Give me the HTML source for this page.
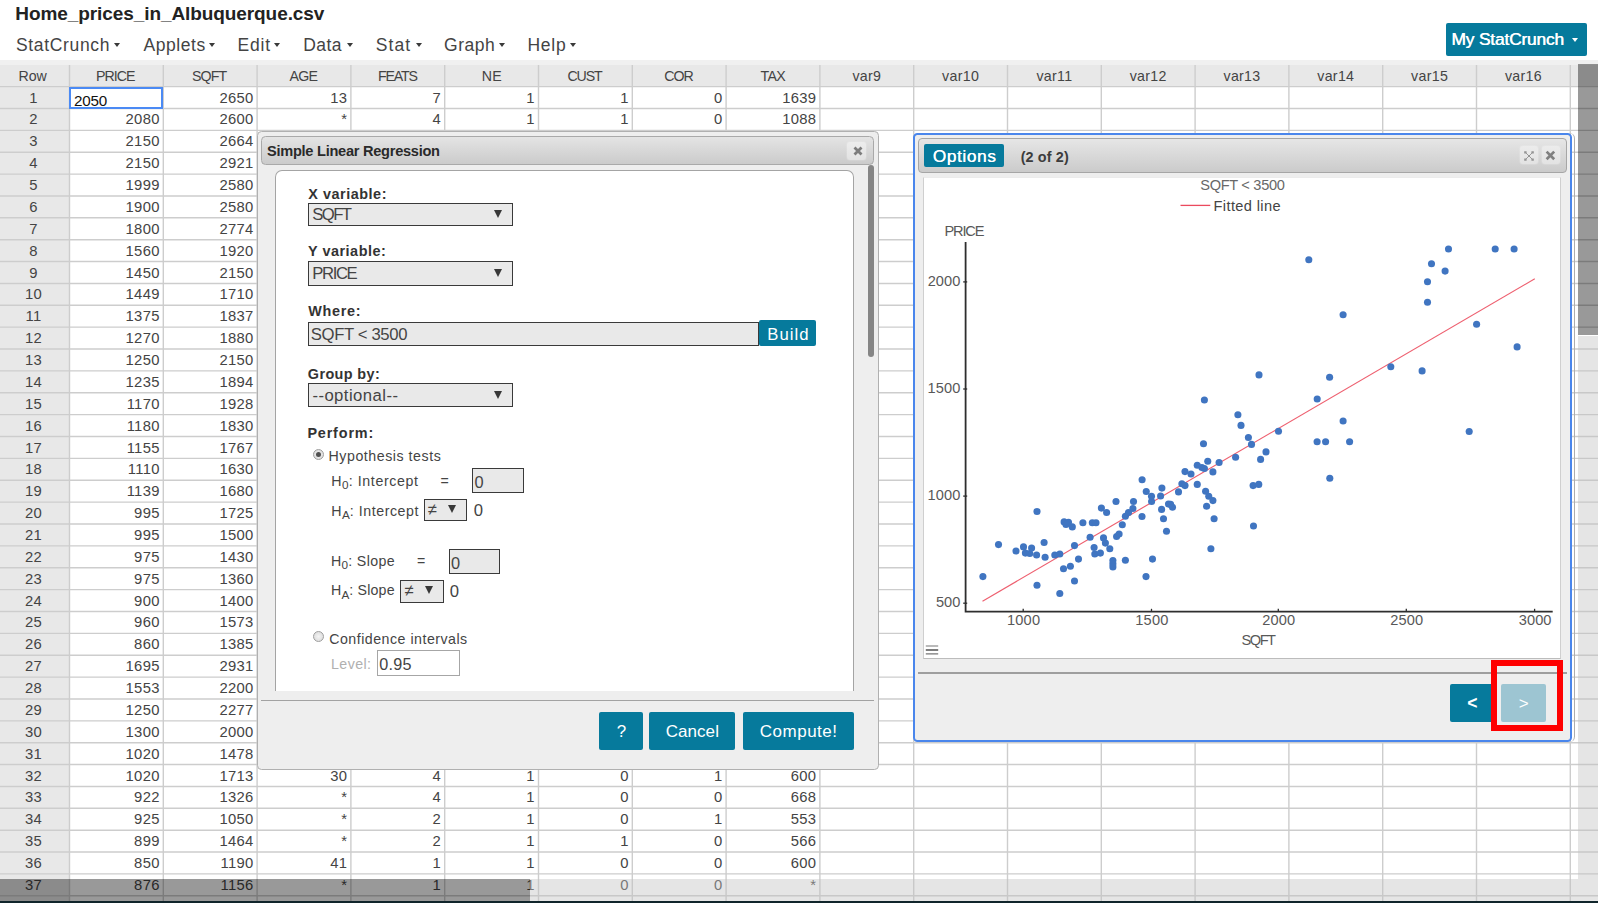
<!DOCTYPE html><html><head><meta charset="utf-8"><title>StatCrunch</title><style>
*{box-sizing:border-box;margin:0;padding:0}
html,body{width:1598px;height:903px;overflow:hidden;background:#fff}
body{font-family:"Liberation Sans",sans-serif;color:#444;position:relative}
.abs{position:absolute}
.t{position:absolute;white-space:nowrap;line-height:1;color:#444}
.caret{position:absolute;width:0;height:0;border-left:3.7px solid transparent;border-right:3.7px solid transparent;border-top:4px solid #3a3a3a;top:43px}
#mysc{left:1446.4px;top:23.4px;width:140.6px;height:32.4px;background:#067a9c;border-radius:2px}
#mysc i{position:absolute;left:125.2px;top:14.6px;width:0;height:0;border-left:3.5px solid transparent;border-right:3.5px solid transparent;border-top:4.2px solid #fff}
#gridtop{left:0;top:59.7px;width:1598px;height:6px;background:#f0f0f0}
#grid{left:0;top:65.0px;width:1598px;height:838px;overflow:hidden;background:#fff}
.hl{position:absolute;left:0;width:1598px;height:1.3px;background:#d3d3d3}
.vl{position:absolute;top:0;width:1.3px;height:840px;background:#d3d3d3}
.hb{position:absolute;top:0;left:0;width:1598px;height:21.6px;background:#e8e8e8}
.rb{position:absolute;top:0;left:0;width:69.5px;height:840px;background:#e8e8e8}
.hc{position:absolute;top:0;height:21.6px;text-align:center;font-size:14.2px;line-height:22.4px;color:#444;letter-spacing:0.3px}
.rh{position:absolute;left:0;width:69.5px;height:21.87px;text-align:center;font-size:14.8px;line-height:23.470000000000002px;color:#444;padding-right:2.4px;letter-spacing:0.3px}
.c{position:absolute;width:93.8px;height:21.87px;text-align:right;padding-right:3.6px;font-size:14.8px;line-height:23.470000000000002px;color:#444;letter-spacing:0.3px}
#selcell{left:68.9px;top:87.1px;width:94px;height:22.2px;border:2px solid #4b8af4;background:#fff}

#d1{left:256.6px;top:131px;width:622px;height:638.6px;background:#eee;border:1.6px solid #b0b0b0;border-radius:4.5px}
#d1bar{left:261.3px;top:135.9px;width:612.8px;height:29.3px;border:1.5px solid #a9a9a9;border-radius:4.5px;background:linear-gradient(#e4e4e4,#cbcbcb)}
.xbtn{position:absolute;width:19.2px;height:17.4px;background:linear-gradient(#ededed,#e2e2e2);border-radius:3px;box-shadow:0 0 1.5px rgba(255,255,255,0.6)}
.xbtn svg{position:absolute;left:5.6px;top:3.9px}
#d1panel{left:275.4px;top:170.2px;width:578.4px;height:521.3px;background:#fff;border:1.6px solid #a4a4a4;border-bottom:none;border-radius:7px 7px 0 0}
#d1sb{left:868.1px;top:165.4px;width:5.7px;height:192px;background:#858585;border-radius:3px}
#d1sep{left:261.3px;top:699.9px;width:612.8px;height:1.5px;background:#a2a2a2}
.sel{position:absolute;background:#e9e9e9;border:1.5px solid #3a3a3a}
.arr{position:absolute;width:0;height:0;border-left:4.9px solid transparent;border-right:4.9px solid transparent;border-top:8.8px solid #383838}
.btn{position:absolute;background:#067a9c;border-radius:2px}
.radio{position:absolute;width:11px;height:11px;border-radius:50%;border:1px solid #9e9e9e;background:radial-gradient(#f4f4f4,#d6d6d6)}
.radio b{position:absolute;left:2px;top:2px;width:5px;height:5px;border-radius:50%;background:#505050}
.t sub{font-size:0.83em;vertical-align:baseline;position:relative;top:3.6px;letter-spacing:0}

#d2{left:912.7px;top:132.5px;width:659.2px;height:609.1px;background:#eee;border:2.2px solid #4a86ec;border-radius:4.5px}
#d2sh{left:1566px;top:133.4px;width:8.5px;height:608.6px;border-right:1.5px solid #adadad;border-radius:0 5.5px 5.5px 0}
#d2bar{left:917.9px;top:137.8px;width:649px;height:35.4px;border:1.2px solid #a6a6a6;border-radius:4px;background:linear-gradient(#e6e6e6,#cbcbcb)}
#d2opt{left:923.8px;top:143.7px;width:80.2px;height:23.5px;background:#067a9c;border-radius:2px}
#d2panel{left:922.6px;top:176.6px;width:638.4px;height:482.2px;background:#fff;border:1.2px solid #cfcfcf;border-top-color:#ececec;border-bottom-color:#bcbcbc}
#d2sep{left:918px;top:671.5px;width:649px;height:2px;background:#9e9e9e}
#redbox{left:1491px;top:660px;width:72.2px;height:71px;border:6.1px solid #fe0000}
#chart{left:0;top:0}
.ib{position:absolute;background:linear-gradient(#ececec,#e3e3e3);border-radius:3px;box-shadow:0 0 1.5px rgba(255,255,255,0.7)}
.ib svg{position:absolute}

#vsb{left:1578.1px;top:335.5px;width:20px;height:543.9px;background:rgba(192,192,192,0.42)}
#vsbt{left:1578.1px;top:64.4px;width:20px;height:271.1px;background:rgba(0,0,0,0.4)}
#hsb{left:529.8px;top:879.4px;width:1069px;height:21.4px;background:rgba(192,192,192,0.42)}
#hsbt{left:0;top:879.4px;width:529.8px;height:21.4px;background:rgba(0,0,0,0.4)}
#botline{left:0;top:900.7px;width:1598px;height:3px;background:#10252b}
</style></head><body>
<div class="t" style="left:15.31px;top:4.42px;font-size:19px;letter-spacing:-0.084px;font-weight:bold;color:#222;">Home_prices_in_Albuquerque.csv</div>
<div class="t" style="left:15.95px;top:37.19px;font-size:17.5px;letter-spacing:0.665px;">StatCrunch</div>
<i class="caret" style="left:114.4px"></i>
<div class="t" style="left:143.60px;top:37.19px;font-size:17.5px;letter-spacing:0.529px;">Applets</div>
<i class="caret" style="left:208.8px"></i>
<div class="t" style="left:237.43px;top:37.19px;font-size:17.5px;letter-spacing:0.884px;">Edit</div>
<i class="caret" style="left:274.1px"></i>
<div class="t" style="left:303.23px;top:37.19px;font-size:17.5px;letter-spacing:0.430px;">Data</div>
<i class="caret" style="left:347.3px"></i>
<div class="t" style="left:375.85px;top:37.19px;font-size:17.5px;letter-spacing:1.019px;">Stat</div>
<i class="caret" style="left:415.5px"></i>
<div class="t" style="left:444.08px;top:37.19px;font-size:17.5px;letter-spacing:0.491px;">Graph</div>
<i class="caret" style="left:499.1px"></i>
<div class="t" style="left:527.43px;top:37.19px;font-size:17.5px;letter-spacing:0.762px;">Help</div>
<i class="caret" style="left:569.8px"></i>
<div class="abs" id="mysc"><i></i></div>
<div class="t" style="left:1451.24px;top:31.27px;font-size:17.4px;letter-spacing:-0.186px;color:#fff;text-shadow:0.5px 0 0 #fff">My StatCrunch</div>
<div class="abs" id="gridtop"></div>
<div class="abs" id="grid"><div class="hb"></div><div class="rb"></div><div class="t" style="left:18.39px;top:3.98px;font-size:14.2px;letter-spacing:0.015px;">Row</div><div class="t" style="left:95.89px;top:3.98px;font-size:14.2px;letter-spacing:-0.923px;">PRICE</div><div class="t" style="left:192.06px;top:3.98px;font-size:14.2px;letter-spacing:-0.893px;">SQFT</div><div class="t" style="left:289.50px;top:3.98px;font-size:14.2px;letter-spacing:-0.696px;">AGE</div><div class="t" style="left:377.89px;top:3.98px;font-size:14.2px;letter-spacing:-1.126px;">FEATS</div><div class="t" style="left:481.69px;top:3.98px;font-size:14.2px;letter-spacing:0.280px;">NE</div><div class="t" style="left:567.43px;top:3.98px;font-size:14.2px;letter-spacing:-1.115px;">CUST</div><div class="t" style="left:664.33px;top:3.98px;font-size:14.2px;letter-spacing:-0.998px;">COR</div><div class="t" style="left:760.48px;top:3.98px;font-size:14.2px;letter-spacing:-0.694px;">TAX</div><div class="hc" style="left:819.90px;width:93.8px">var9</div><div class="hc" style="left:913.70px;width:93.8px">var10</div><div class="hc" style="left:1007.50px;width:93.8px">var11</div><div class="hc" style="left:1101.30px;width:93.8px">var12</div><div class="hc" style="left:1195.10px;width:93.8px">var13</div><div class="hc" style="left:1288.90px;width:93.8px">var14</div><div class="hc" style="left:1382.70px;width:93.8px">var15</div><div class="hc" style="left:1476.50px;width:93.8px">var16</div><div class="rh" style="top:21.60px">1</div><div class="c" style="left:163.30px;top:21.60px">2650</div><div class="c" style="left:257.10px;top:21.60px">13</div><div class="c" style="left:350.90px;top:21.60px">7</div><div class="c" style="left:444.70px;top:21.60px">1</div><div class="c" style="left:538.50px;top:21.60px">1</div><div class="c" style="left:632.30px;top:21.60px">0</div><div class="c" style="left:726.10px;top:21.60px">1639</div><div class="rh" style="top:43.47px">2</div><div class="c" style="left:69.50px;top:43.47px">2080</div><div class="c" style="left:163.30px;top:43.47px">2600</div><div class="c" style="left:257.10px;top:43.47px">*</div><div class="c" style="left:350.90px;top:43.47px">4</div><div class="c" style="left:444.70px;top:43.47px">1</div><div class="c" style="left:538.50px;top:43.47px">1</div><div class="c" style="left:632.30px;top:43.47px">0</div><div class="c" style="left:726.10px;top:43.47px">1088</div><div class="rh" style="top:65.34px">3</div><div class="c" style="left:69.50px;top:65.34px">2150</div><div class="c" style="left:163.30px;top:65.34px">2664</div><div class="c" style="left:257.10px;top:65.34px">6</div><div class="c" style="left:350.90px;top:65.34px">5</div><div class="c" style="left:444.70px;top:65.34px">1</div><div class="c" style="left:538.50px;top:65.34px">1</div><div class="c" style="left:632.30px;top:65.34px">0</div><div class="c" style="left:726.10px;top:65.34px">1193</div><div class="rh" style="top:87.21px">4</div><div class="c" style="left:69.50px;top:87.21px">2150</div><div class="c" style="left:163.30px;top:87.21px">2921</div><div class="c" style="left:257.10px;top:87.21px">3</div><div class="c" style="left:350.90px;top:87.21px">6</div><div class="c" style="left:444.70px;top:87.21px">1</div><div class="c" style="left:538.50px;top:87.21px">1</div><div class="c" style="left:632.30px;top:87.21px">0</div><div class="c" style="left:726.10px;top:87.21px">1635</div><div class="rh" style="top:109.08px">5</div><div class="c" style="left:69.50px;top:109.08px">1999</div><div class="c" style="left:163.30px;top:109.08px">2580</div><div class="c" style="left:257.10px;top:109.08px">4</div><div class="c" style="left:350.90px;top:109.08px">4</div><div class="c" style="left:444.70px;top:109.08px">1</div><div class="c" style="left:538.50px;top:109.08px">1</div><div class="c" style="left:632.30px;top:109.08px">0</div><div class="c" style="left:726.10px;top:109.08px">1732</div><div class="rh" style="top:130.95px">6</div><div class="c" style="left:69.50px;top:130.95px">1900</div><div class="c" style="left:163.30px;top:130.95px">2580</div><div class="c" style="left:257.10px;top:130.95px">4</div><div class="c" style="left:350.90px;top:130.95px">4</div><div class="c" style="left:444.70px;top:130.95px">1</div><div class="c" style="left:538.50px;top:130.95px">0</div><div class="c" style="left:632.30px;top:130.95px">0</div><div class="c" style="left:726.10px;top:130.95px">1534</div><div class="rh" style="top:152.82px">7</div><div class="c" style="left:69.50px;top:152.82px">1800</div><div class="c" style="left:163.30px;top:152.82px">2774</div><div class="c" style="left:257.10px;top:152.82px">2</div><div class="c" style="left:350.90px;top:152.82px">4</div><div class="c" style="left:444.70px;top:152.82px">1</div><div class="c" style="left:538.50px;top:152.82px">0</div><div class="c" style="left:632.30px;top:152.82px">0</div><div class="c" style="left:726.10px;top:152.82px">1765</div><div class="rh" style="top:174.69px">8</div><div class="c" style="left:69.50px;top:174.69px">1560</div><div class="c" style="left:163.30px;top:174.69px">1920</div><div class="c" style="left:257.10px;top:174.69px">1</div><div class="c" style="left:350.90px;top:174.69px">5</div><div class="c" style="left:444.70px;top:174.69px">1</div><div class="c" style="left:538.50px;top:174.69px">1</div><div class="c" style="left:632.30px;top:174.69px">0</div><div class="c" style="left:726.10px;top:174.69px">1161</div><div class="rh" style="top:196.56px">9</div><div class="c" style="left:69.50px;top:196.56px">1450</div><div class="c" style="left:163.30px;top:196.56px">2150</div><div class="c" style="left:257.10px;top:196.56px">*</div><div class="c" style="left:350.90px;top:196.56px">4</div><div class="c" style="left:444.70px;top:196.56px">1</div><div class="c" style="left:538.50px;top:196.56px">0</div><div class="c" style="left:632.30px;top:196.56px">0</div><div class="c" style="left:726.10px;top:196.56px">*</div><div class="rh" style="top:218.43px">10</div><div class="c" style="left:69.50px;top:218.43px">1449</div><div class="c" style="left:163.30px;top:218.43px">1710</div><div class="c" style="left:257.10px;top:218.43px">1</div><div class="c" style="left:350.90px;top:218.43px">3</div><div class="c" style="left:444.70px;top:218.43px">1</div><div class="c" style="left:538.50px;top:218.43px">1</div><div class="c" style="left:632.30px;top:218.43px">0</div><div class="c" style="left:726.10px;top:218.43px">1010</div><div class="rh" style="top:240.30px">11</div><div class="c" style="left:69.50px;top:240.30px">1375</div><div class="c" style="left:163.30px;top:240.30px">1837</div><div class="c" style="left:257.10px;top:240.30px">4</div><div class="c" style="left:350.90px;top:240.30px">5</div><div class="c" style="left:444.70px;top:240.30px">1</div><div class="c" style="left:538.50px;top:240.30px">0</div><div class="c" style="left:632.30px;top:240.30px">0</div><div class="c" style="left:726.10px;top:240.30px">1191</div><div class="rh" style="top:262.17px">12</div><div class="c" style="left:69.50px;top:262.17px">1270</div><div class="c" style="left:163.30px;top:262.17px">1880</div><div class="c" style="left:257.10px;top:262.17px">8</div><div class="c" style="left:350.90px;top:262.17px">6</div><div class="c" style="left:444.70px;top:262.17px">1</div><div class="c" style="left:538.50px;top:262.17px">0</div><div class="c" style="left:632.30px;top:262.17px">0</div><div class="c" style="left:726.10px;top:262.17px">930</div><div class="rh" style="top:284.04px">13</div><div class="c" style="left:69.50px;top:284.04px">1250</div><div class="c" style="left:163.30px;top:284.04px">2150</div><div class="c" style="left:257.10px;top:284.04px">15</div><div class="c" style="left:350.90px;top:284.04px">3</div><div class="c" style="left:444.70px;top:284.04px">1</div><div class="c" style="left:538.50px;top:284.04px">0</div><div class="c" style="left:632.30px;top:284.04px">0</div><div class="c" style="left:726.10px;top:284.04px">984</div><div class="rh" style="top:305.91px">14</div><div class="c" style="left:69.50px;top:305.91px">1235</div><div class="c" style="left:163.30px;top:305.91px">1894</div><div class="c" style="left:257.10px;top:305.91px">14</div><div class="c" style="left:350.90px;top:305.91px">5</div><div class="c" style="left:444.70px;top:305.91px">1</div><div class="c" style="left:538.50px;top:305.91px">1</div><div class="c" style="left:632.30px;top:305.91px">0</div><div class="c" style="left:726.10px;top:305.91px">1112</div><div class="rh" style="top:327.78px">15</div><div class="c" style="left:69.50px;top:327.78px">1170</div><div class="c" style="left:163.30px;top:327.78px">1928</div><div class="c" style="left:257.10px;top:327.78px">18</div><div class="c" style="left:350.90px;top:327.78px">8</div><div class="c" style="left:444.70px;top:327.78px">1</div><div class="c" style="left:538.50px;top:327.78px">1</div><div class="c" style="left:632.30px;top:327.78px">0</div><div class="c" style="left:726.10px;top:327.78px">600</div><div class="rh" style="top:349.65px">16</div><div class="c" style="left:69.50px;top:349.65px">1180</div><div class="c" style="left:163.30px;top:349.65px">1830</div><div class="c" style="left:257.10px;top:349.65px">*</div><div class="c" style="left:350.90px;top:349.65px">3</div><div class="c" style="left:444.70px;top:349.65px">1</div><div class="c" style="left:538.50px;top:349.65px">0</div><div class="c" style="left:632.30px;top:349.65px">0</div><div class="c" style="left:726.10px;top:349.65px">733</div><div class="rh" style="top:371.52px">17</div><div class="c" style="left:69.50px;top:371.52px">1155</div><div class="c" style="left:163.30px;top:371.52px">1767</div><div class="c" style="left:257.10px;top:371.52px">16</div><div class="c" style="left:350.90px;top:371.52px">4</div><div class="c" style="left:444.70px;top:371.52px">1</div><div class="c" style="left:538.50px;top:371.52px">0</div><div class="c" style="left:632.30px;top:371.52px">0</div><div class="c" style="left:726.10px;top:371.52px">794</div><div class="rh" style="top:393.39px">18</div><div class="c" style="left:69.50px;top:393.39px">1110</div><div class="c" style="left:163.30px;top:393.39px">1630</div><div class="c" style="left:257.10px;top:393.39px">15</div><div class="c" style="left:350.90px;top:393.39px">3</div><div class="c" style="left:444.70px;top:393.39px">1</div><div class="c" style="left:538.50px;top:393.39px">0</div><div class="c" style="left:632.30px;top:393.39px">1</div><div class="c" style="left:726.10px;top:393.39px">867</div><div class="rh" style="top:415.26px">19</div><div class="c" style="left:69.50px;top:415.26px">1139</div><div class="c" style="left:163.30px;top:415.26px">1680</div><div class="c" style="left:257.10px;top:415.26px">17</div><div class="c" style="left:350.90px;top:415.26px">4</div><div class="c" style="left:444.70px;top:415.26px">1</div><div class="c" style="left:538.50px;top:415.26px">0</div><div class="c" style="left:632.30px;top:415.26px">1</div><div class="c" style="left:726.10px;top:415.26px">750</div><div class="rh" style="top:437.13px">20</div><div class="c" style="left:69.50px;top:437.13px">995</div><div class="c" style="left:163.30px;top:437.13px">1725</div><div class="c" style="left:257.10px;top:437.13px">*</div><div class="c" style="left:350.90px;top:437.13px">3</div><div class="c" style="left:444.70px;top:437.13px">1</div><div class="c" style="left:538.50px;top:437.13px">0</div><div class="c" style="left:632.30px;top:437.13px">0</div><div class="c" style="left:726.10px;top:437.13px">923</div><div class="rh" style="top:459.00px">21</div><div class="c" style="left:69.50px;top:459.00px">995</div><div class="c" style="left:163.30px;top:459.00px">1500</div><div class="c" style="left:257.10px;top:459.00px">15</div><div class="c" style="left:350.90px;top:459.00px">4</div><div class="c" style="left:444.70px;top:459.00px">1</div><div class="c" style="left:538.50px;top:459.00px">0</div><div class="c" style="left:632.30px;top:459.00px">0</div><div class="c" style="left:726.10px;top:459.00px">743</div><div class="rh" style="top:480.87px">22</div><div class="c" style="left:69.50px;top:480.87px">975</div><div class="c" style="left:163.30px;top:480.87px">1430</div><div class="c" style="left:257.10px;top:480.87px">*</div><div class="c" style="left:350.90px;top:480.87px">3</div><div class="c" style="left:444.70px;top:480.87px">1</div><div class="c" style="left:538.50px;top:480.87px">0</div><div class="c" style="left:632.30px;top:480.87px">0</div><div class="c" style="left:726.10px;top:480.87px">752</div><div class="rh" style="top:502.74px">23</div><div class="c" style="left:69.50px;top:502.74px">975</div><div class="c" style="left:163.30px;top:502.74px">1360</div><div class="c" style="left:257.10px;top:502.74px">*</div><div class="c" style="left:350.90px;top:502.74px">4</div><div class="c" style="left:444.70px;top:502.74px">1</div><div class="c" style="left:538.50px;top:502.74px">0</div><div class="c" style="left:632.30px;top:502.74px">0</div><div class="c" style="left:726.10px;top:502.74px">696</div><div class="rh" style="top:524.61px">24</div><div class="c" style="left:69.50px;top:524.61px">900</div><div class="c" style="left:163.30px;top:524.61px">1400</div><div class="c" style="left:257.10px;top:524.61px">16</div><div class="c" style="left:350.90px;top:524.61px">2</div><div class="c" style="left:444.70px;top:524.61px">1</div><div class="c" style="left:538.50px;top:524.61px">0</div><div class="c" style="left:632.30px;top:524.61px">1</div><div class="c" style="left:726.10px;top:524.61px">731</div><div class="rh" style="top:546.48px">25</div><div class="c" style="left:69.50px;top:546.48px">960</div><div class="c" style="left:163.30px;top:546.48px">1573</div><div class="c" style="left:257.10px;top:546.48px">17</div><div class="c" style="left:350.90px;top:546.48px">6</div><div class="c" style="left:444.70px;top:546.48px">1</div><div class="c" style="left:538.50px;top:546.48px">0</div><div class="c" style="left:632.30px;top:546.48px">0</div><div class="c" style="left:726.10px;top:546.48px">768</div><div class="rh" style="top:568.35px">26</div><div class="c" style="left:69.50px;top:568.35px">860</div><div class="c" style="left:163.30px;top:568.35px">1385</div><div class="c" style="left:257.10px;top:568.35px">*</div><div class="c" style="left:350.90px;top:568.35px">2</div><div class="c" style="left:444.70px;top:568.35px">1</div><div class="c" style="left:538.50px;top:568.35px">0</div><div class="c" style="left:632.30px;top:568.35px">0</div><div class="c" style="left:726.10px;top:568.35px">653</div><div class="rh" style="top:590.22px">27</div><div class="c" style="left:69.50px;top:590.22px">1695</div><div class="c" style="left:163.30px;top:590.22px">2931</div><div class="c" style="left:257.10px;top:590.22px">28</div><div class="c" style="left:350.90px;top:590.22px">3</div><div class="c" style="left:444.70px;top:590.22px">1</div><div class="c" style="left:538.50px;top:590.22px">0</div><div class="c" style="left:632.30px;top:590.22px">1</div><div class="c" style="left:726.10px;top:590.22px">1142</div><div class="rh" style="top:612.09px">28</div><div class="c" style="left:69.50px;top:612.09px">1553</div><div class="c" style="left:163.30px;top:612.09px">2200</div><div class="c" style="left:257.10px;top:612.09px">28</div><div class="c" style="left:350.90px;top:612.09px">4</div><div class="c" style="left:444.70px;top:612.09px">1</div><div class="c" style="left:538.50px;top:612.09px">0</div><div class="c" style="left:632.30px;top:612.09px">0</div><div class="c" style="left:726.10px;top:612.09px">1035</div><div class="rh" style="top:633.96px">29</div><div class="c" style="left:69.50px;top:633.96px">1250</div><div class="c" style="left:163.30px;top:633.96px">2277</div><div class="c" style="left:257.10px;top:633.96px">*</div><div class="c" style="left:350.90px;top:633.96px">4</div><div class="c" style="left:444.70px;top:633.96px">1</div><div class="c" style="left:538.50px;top:633.96px">0</div><div class="c" style="left:632.30px;top:633.96px">0</div><div class="c" style="left:726.10px;top:633.96px">*</div><div class="rh" style="top:655.83px">30</div><div class="c" style="left:69.50px;top:655.83px">1300</div><div class="c" style="left:163.30px;top:655.83px">2000</div><div class="c" style="left:257.10px;top:655.83px">*</div><div class="c" style="left:350.90px;top:655.83px">4</div><div class="c" style="left:444.70px;top:655.83px">1</div><div class="c" style="left:538.50px;top:655.83px">0</div><div class="c" style="left:632.30px;top:655.83px">0</div><div class="c" style="left:726.10px;top:655.83px">*</div><div class="rh" style="top:677.70px">31</div><div class="c" style="left:69.50px;top:677.70px">1020</div><div class="c" style="left:163.30px;top:677.70px">1478</div><div class="c" style="left:257.10px;top:677.70px">53</div><div class="c" style="left:350.90px;top:677.70px">3</div><div class="c" style="left:444.70px;top:677.70px">1</div><div class="c" style="left:538.50px;top:677.70px">0</div><div class="c" style="left:632.30px;top:677.70px">1</div><div class="c" style="left:726.10px;top:677.70px">590</div><div class="rh" style="top:699.57px">32</div><div class="c" style="left:69.50px;top:699.57px">1020</div><div class="c" style="left:163.30px;top:699.57px">1713</div><div class="c" style="left:257.10px;top:699.57px">30</div><div class="c" style="left:350.90px;top:699.57px">4</div><div class="c" style="left:444.70px;top:699.57px">1</div><div class="c" style="left:538.50px;top:699.57px">0</div><div class="c" style="left:632.30px;top:699.57px">1</div><div class="c" style="left:726.10px;top:699.57px">600</div><div class="rh" style="top:721.44px">33</div><div class="c" style="left:69.50px;top:721.44px">922</div><div class="c" style="left:163.30px;top:721.44px">1326</div><div class="c" style="left:257.10px;top:721.44px">*</div><div class="c" style="left:350.90px;top:721.44px">4</div><div class="c" style="left:444.70px;top:721.44px">1</div><div class="c" style="left:538.50px;top:721.44px">0</div><div class="c" style="left:632.30px;top:721.44px">0</div><div class="c" style="left:726.10px;top:721.44px">668</div><div class="rh" style="top:743.31px">34</div><div class="c" style="left:69.50px;top:743.31px">925</div><div class="c" style="left:163.30px;top:743.31px">1050</div><div class="c" style="left:257.10px;top:743.31px">*</div><div class="c" style="left:350.90px;top:743.31px">2</div><div class="c" style="left:444.70px;top:743.31px">1</div><div class="c" style="left:538.50px;top:743.31px">0</div><div class="c" style="left:632.30px;top:743.31px">1</div><div class="c" style="left:726.10px;top:743.31px">553</div><div class="rh" style="top:765.18px">35</div><div class="c" style="left:69.50px;top:765.18px">899</div><div class="c" style="left:163.30px;top:765.18px">1464</div><div class="c" style="left:257.10px;top:765.18px">*</div><div class="c" style="left:350.90px;top:765.18px">2</div><div class="c" style="left:444.70px;top:765.18px">1</div><div class="c" style="left:538.50px;top:765.18px">1</div><div class="c" style="left:632.30px;top:765.18px">0</div><div class="c" style="left:726.10px;top:765.18px">566</div><div class="rh" style="top:787.05px">36</div><div class="c" style="left:69.50px;top:787.05px">850</div><div class="c" style="left:163.30px;top:787.05px">1190</div><div class="c" style="left:257.10px;top:787.05px">41</div><div class="c" style="left:350.90px;top:787.05px">1</div><div class="c" style="left:444.70px;top:787.05px">1</div><div class="c" style="left:538.50px;top:787.05px">0</div><div class="c" style="left:632.30px;top:787.05px">0</div><div class="c" style="left:726.10px;top:787.05px">600</div><div class="rh" style="top:808.92px">37</div><div class="c" style="left:69.50px;top:808.92px">876</div><div class="c" style="left:163.30px;top:808.92px">1156</div><div class="c" style="left:257.10px;top:808.92px">*</div><div class="c" style="left:350.90px;top:808.92px">1</div><div class="c" style="left:444.70px;top:808.92px">1</div><div class="c" style="left:538.50px;top:808.92px">0</div><div class="c" style="left:632.30px;top:808.92px">0</div><div class="c" style="left:726.10px;top:808.92px">*</div><svg class="abs" style="left:0;top:0" width="1598" height="840"><path d="M0 21.60H1598M0 43.47H1598M0 65.34H1598M0 87.21H1598M0 109.08H1598M0 130.95H1598M0 152.82H1598M0 174.69H1598M0 196.56H1598M0 218.43H1598M0 240.30H1598M0 262.17H1598M0 284.04H1598M0 305.91H1598M0 327.78H1598M0 349.65H1598M0 371.52H1598M0 393.39H1598M0 415.26H1598M0 437.13H1598M0 459.00H1598M0 480.87H1598M0 502.74H1598M0 524.61H1598M0 546.48H1598M0 568.35H1598M0 590.22H1598M0 612.09H1598M0 633.96H1598M0 655.83H1598M0 677.70H1598M0 699.57H1598M0 721.44H1598M0 743.31H1598M0 765.18H1598M0 787.05H1598M0 808.92H1598M0 830.79H1598M0 852.66H1598M69.50 0V840M163.30 0V840M257.10 0V840M350.90 0V840M444.70 0V840M538.50 0V840M632.30 0V840M726.10 0V840M819.90 0V840M913.70 0V840M1007.50 0V840M1101.30 0V840M1195.10 0V840M1288.90 0V840M1382.70 0V840M1476.50 0V840M1570.30 0V840M1664.10 0V840" stroke="#cdcdcd" stroke-width="1.4" fill="none"/></svg></div>
<div class="abs" id="selcell"></div>
<div class="t" style="left:73.89px;top:93.13px;font-size:15.2px;letter-spacing:-0.141px;color:#111;">2050</div>
<div class="abs" id="vsb"></div><div class="abs" id="vsbt"></div>
<div class="abs" id="d1"></div>
<div class="abs" id="d1bar"></div>
<div class="t" style="left:266.97px;top:144.34px;font-size:14.6px;letter-spacing:-0.269px;font-weight:bold;color:#2a2a2a;">Simple Linear Regression</div>
<div class="xbtn" style="left:847px;top:142.2px"><svg width="10" height="10" viewBox="0 0 10 10"><path d="M1.5 1.5L8.5 8.5M8.5 1.5L1.5 8.5" stroke="#7c7c7c" stroke-width="2.8" fill="none"/></svg></div>
<div class="abs" id="d1panel"></div>
<div class="abs" id="d1sb"></div>
<div class="abs" id="d1sep"></div>
<div class="t" style="left:308.30px;top:186.81px;font-size:14.4px;letter-spacing:0.536px;font-weight:bold;color:#333;">X variable:</div>
<div class="sel" style="left:307.8px;top:203px;width:205.20px;height:23.30px;"></div>
<div class="t" style="left:312.28px;top:206.66px;font-size:16.7px;letter-spacing:-1.574px;">SQFT</div>
<i class="arr" style="left:494.2px;top:209.7px"></i>
<div class="t" style="left:308.07px;top:243.81px;font-size:14.4px;letter-spacing:0.518px;font-weight:bold;color:#333;">Y variable:</div>
<div class="sel" style="left:307.8px;top:261.1px;width:205.20px;height:24.50px;"></div>
<div class="t" style="left:312.20px;top:265.76px;font-size:16.7px;letter-spacing:-1.358px;">PRICE</div>
<i class="arr" style="left:494.2px;top:268.9px"></i>
<div class="t" style="left:308.30px;top:304.31px;font-size:14.4px;letter-spacing:0.678px;font-weight:bold;color:#333;">Where:</div>
<div class="sel" style="left:308.3px;top:322px;width:451.20px;height:24.20px;"></div>
<div class="t" style="left:310.78px;top:326.86px;font-size:16.7px;letter-spacing:-0.368px;">SQFT &lt; 3500</div>
<div class="btn" style="left:758.6px;top:320.4px;width:57.3px;height:26.1px"></div>
<div class="t" style="left:767.30px;top:326.86px;font-size:16.7px;letter-spacing:1.002px;color:#fff;">Build</div>
<div class="t" style="left:307.85px;top:366.71px;font-size:14.4px;letter-spacing:0.394px;font-weight:bold;color:#333;">Group by:</div>
<div class="sel" style="left:307.8px;top:383.3px;width:205.20px;height:24.20px;"></div>
<div class="t" style="left:312.38px;top:387.66px;font-size:16.7px;letter-spacing:0.444px;">--optional--</div>
<i class="arr" style="left:494.2px;top:391px"></i>
<div class="t" style="left:307.40px;top:425.71px;font-size:14.4px;letter-spacing:0.841px;font-weight:bold;color:#333;">Perform:</div>
<div class="radio" style="left:312.8px;top:448.8px"><b></b></div>
<div class="t" style="left:328.59px;top:448.78px;font-size:14.2px;letter-spacing:0.538px;">Hypothesis tests</div>
<div class="t" style="left:331.19px;top:473.58px;font-size:14.2px;letter-spacing:0.630px;">H<sub>0</sub>: Intercept</div>
<div class="t" style="left:440.53px;top:473.78px;font-size:14.2px;">=</div>
<div class="sel" style="left:472.3px;top:467.5px;width:51.50px;height:25.80px;"></div>
<div class="t" style="left:474.49px;top:473.52px;font-size:16.4px;">0</div>
<div class="t" style="left:331.19px;top:503.58px;font-size:14.2px;letter-spacing:0.549px;">H<sub>A</sub>: Intercept</div>
<div class="sel" style="left:423.9px;top:498.6px;width:43.30px;height:22.80px;"></div>
<div class="t" style="left:427.58px;top:501.96px;font-size:16.7px;">≠</div>
<i class="arr" style="left:448.3px;top:504.6px"></i>
<div class="t" style="left:473.68px;top:502.96px;font-size:16.7px;">0</div>
<div class="t" style="left:330.99px;top:553.88px;font-size:14.2px;letter-spacing:0.378px;">H<sub>0</sub>: Slope</div>
<div class="t" style="left:416.93px;top:554.08px;font-size:14.2px;">=</div>
<div class="sel" style="left:449px;top:548.6px;width:51.20px;height:25.90px;"></div>
<div class="t" style="left:450.99px;top:554.82px;font-size:16.4px;">0</div>
<div class="t" style="left:330.99px;top:583.28px;font-size:14.2px;letter-spacing:0.181px;">H<sub>A</sub>: Slope</div>
<div class="sel" style="left:400.3px;top:579.9px;width:43.60px;height:22.70px;"></div>
<div class="t" style="left:404.18px;top:582.96px;font-size:16.7px;">≠</div>
<i class="arr" style="left:425px;top:586.3px"></i>
<div class="t" style="left:449.78px;top:584.16px;font-size:16.7px;">0</div>
<div class="radio" style="left:313px;top:631.2px"></div>
<div class="t" style="left:329.23px;top:632.28px;font-size:14.2px;letter-spacing:0.497px;">Confidence intervals</div>
<div class="t" style="left:330.99px;top:656.88px;font-size:14.2px;letter-spacing:0.440px;color:#b0b0b0;">Level:</div>
<div class="sel" style="left:377.2px;top:650.4px;width:82.60px;height:25.50px;background:#fff;border:1.2px solid #a6a6a6"></div>
<div class="t" style="left:379.19px;top:655.99px;font-size:16.2px;letter-spacing:0.311px;">0.95</div>
<div class="btn" style="left:598.8px;top:712.4px;width:44.2px;height:37.6px"></div>
<div class="btn" style="left:648.9px;top:712.4px;width:86.1px;height:37.6px"></div>
<div class="btn" style="left:742.6px;top:712.4px;width:111.3px;height:37.6px"></div>
<div class="t" style="left:616.67px;top:723.31px;font-size:17px;color:#fff;">?</div>
<div class="t" style="left:665.70px;top:723.31px;font-size:17px;letter-spacing:0.060px;color:#fff;">Cancel</div>
<div class="t" style="left:759.80px;top:723.31px;font-size:17px;letter-spacing:0.504px;color:#fff;">Compute!</div><div class="abs" id="d2sh"></div>
<div class="abs" id="d2"></div>
<div class="abs" id="d2bar"></div>
<div class="abs" id="d2opt"></div>
<div class="t" style="left:932.69px;top:148.34px;font-size:17.2px;letter-spacing:0.661px;color:#fff;text-shadow:0.25px 0 0 #fff">Options</div>
<div class="t" style="left:1020.73px;top:149.91px;font-size:14.4px;letter-spacing:0.114px;font-weight:bold;color:#3c3c3c;">(2 of 2)</div>
<div class="ib" style="left:1519.6px;top:146.4px;width:18.7px;height:17.6px"><svg width="10" height="10" viewBox="0 0 10 10" style="left:4.5px;top:4.8px"><path d="M1.6 1.6L8.4 8.4M8.4 1.6L1.6 8.4" stroke="#9a9a9a" stroke-width="1" fill="none"/><path d="M0.2 0.2h2.4v2.4h-2.4zM7.4 0.2h2.4v2.4h-2.4zM0.2 7.4h2.4v2.4h-2.4zM7.4 7.4h2.4v2.4h-2.4z" fill="#929292"/><circle cx="5" cy="5" r="1.1" fill="#929292"/></svg></div>
<div class="ib" style="left:1541.7px;top:146.4px;width:18.7px;height:17.6px"><svg width="11" height="11" viewBox="0 0 11 11" style="left:3.6px;top:3.4px"><path d="M1.6 1.6L9.2 9.2M9.2 1.6L1.6 9.2" stroke="#808080" stroke-width="2.7" fill="none"/></svg></div>
<div class="abs" id="d2panel"></div>
<div class="abs" id="d2sep"></div>
<svg class="abs" id="chart" width="1598" height="903" viewBox="0 0 1598 903"><line x1="1180.5" y1="205.4" x2="1210.3" y2="205.4" stroke="#eb4a5e" stroke-width="1.3"/><path d="M965.6 242V612.4M964.7 611.6H1552.7" stroke="#2e2e2e" stroke-width="1.8" fill="none"/><line x1="963.2" x2="967.2" y1="281.9" y2="281.9" stroke="#2e2e2e" stroke-width="1.3"/><line x1="963.2" x2="967.2" y1="389" y2="389" stroke="#2e2e2e" stroke-width="1.3"/><line x1="963.2" x2="967.2" y1="496.1" y2="496.1" stroke="#2e2e2e" stroke-width="1.3"/><line x1="963.2" x2="967.2" y1="603.2" y2="603.2" stroke="#2e2e2e" stroke-width="1.3"/><line y1="608.8" y2="612" x1="1023.2" x2="1023.2" stroke="#2e2e2e" stroke-width="1.3"/><line y1="608.8" y2="612" x1="1151.5" x2="1151.5" stroke="#2e2e2e" stroke-width="1.3"/><line y1="608.8" y2="612" x1="1278.3" x2="1278.3" stroke="#2e2e2e" stroke-width="1.3"/><line y1="608.8" y2="612" x1="1406.3" x2="1406.3" stroke="#2e2e2e" stroke-width="1.3"/><line y1="608.8" y2="612" x1="1534.6" x2="1534.6" stroke="#2e2e2e" stroke-width="1.3"/><line x1="982.5" y1="601.2" x2="1534.8" y2="278.8" stroke="#ee6070" stroke-width="1.15"/><g fill="#4075c1"><circle cx="982.9" cy="576.6" r="3.55"/><circle cx="998.5" cy="544.6" r="3.55"/><circle cx="1016" cy="551" r="3.55"/><circle cx="1023.5" cy="546.9" r="3.55"/><circle cx="1025.4" cy="553.1" r="3.55"/><circle cx="1029.8" cy="553.5" r="3.55"/><circle cx="1031.6" cy="548.1" r="3.55"/><circle cx="1036.6" cy="555" r="3.55"/><circle cx="1037" cy="511.5" r="3.55"/><circle cx="1044.1" cy="542.5" r="3.55"/><circle cx="1045.1" cy="557.3" r="3.55"/><circle cx="1037" cy="585.3" r="3.55"/><circle cx="1054.8" cy="555" r="3.55"/><circle cx="1059.8" cy="554" r="3.55"/><circle cx="1059.8" cy="593.5" r="3.55"/><circle cx="1063.5" cy="568.8" r="3.55"/><circle cx="1070.4" cy="566.3" r="3.55"/><circle cx="1064.1" cy="521.9" r="3.55"/><circle cx="1068.5" cy="522.3" r="3.55"/><circle cx="1066" cy="524.4" r="3.55"/><circle cx="1072.3" cy="526.9" r="3.55"/><circle cx="1074.5" cy="545.6" r="3.55"/><circle cx="1074.5" cy="581" r="3.55"/><circle cx="1078.5" cy="559.1" r="3.55"/><circle cx="1082.9" cy="522.8" r="3.55"/><circle cx="1092.3" cy="522.8" r="3.55"/><circle cx="1096" cy="522.8" r="3.55"/><circle cx="1090.1" cy="537.3" r="3.55"/><circle cx="1094.1" cy="547.5" r="3.55"/><circle cx="1094.8" cy="554" r="3.55"/><circle cx="1100.4" cy="553.1" r="3.55"/><circle cx="1101.4" cy="508.1" r="3.55"/><circle cx="1106.6" cy="512.5" r="3.55"/><circle cx="1103.5" cy="537.9" r="3.55"/><circle cx="1105.4" cy="543.1" r="3.55"/><circle cx="1109.8" cy="548.8" r="3.55"/><circle cx="1112.9" cy="560.6" r="3.55"/><circle cx="1112.9" cy="563.8" r="3.55"/><circle cx="1112.9" cy="566.9" r="3.55"/><circle cx="1116" cy="501.5" r="3.55"/><circle cx="1116.6" cy="536.5" r="3.55"/><circle cx="1119.1" cy="534" r="3.55"/><circle cx="1122.3" cy="524.8" r="3.55"/><circle cx="1125.4" cy="516.3" r="3.55"/><circle cx="1128.5" cy="512.5" r="3.55"/><circle cx="1132.9" cy="508.5" r="3.55"/><circle cx="1133.5" cy="501.5" r="3.55"/><circle cx="1125.4" cy="560.3" r="3.55"/><circle cx="1142" cy="516.5" r="3.55"/><circle cx="1146" cy="576.6" r="3.55"/><circle cx="1151.6" cy="501.5" r="3.55"/><circle cx="1152.5" cy="559.1" r="3.55"/><circle cx="1161.6" cy="509.4" r="3.55"/><circle cx="1163.5" cy="518.8" r="3.55"/><circle cx="1166.5" cy="531.2" r="3.55"/><circle cx="1204.4" cy="400" r="3.55"/><circle cx="1237.9" cy="414.75" r="3.55"/><circle cx="1241" cy="425.4" r="3.55"/><circle cx="1278.5" cy="431.25" r="3.55"/><circle cx="1248.4" cy="437.5" r="3.55"/><circle cx="1251.5" cy="444.4" r="3.55"/><circle cx="1203.5" cy="443.75" r="3.55"/><circle cx="1266" cy="451.9" r="3.55"/><circle cx="1260.6" cy="459.4" r="3.55"/><circle cx="1235.6" cy="457.25" r="3.55"/><circle cx="1207.75" cy="461.25" r="3.55"/><circle cx="1219.1" cy="462.5" r="3.55"/><circle cx="1197.25" cy="465.25" r="3.55"/><circle cx="1201.9" cy="467.5" r="3.55"/><circle cx="1204.4" cy="468.5" r="3.55"/><circle cx="1212.9" cy="471.9" r="3.55"/><circle cx="1185" cy="471.6" r="3.55"/><circle cx="1191" cy="474" r="3.55"/><circle cx="1142.1" cy="479.75" r="3.55"/><circle cx="1181.9" cy="483.75" r="3.55"/><circle cx="1185" cy="485.6" r="3.55"/><circle cx="1197.25" cy="484.4" r="3.55"/><circle cx="1253.1" cy="485.6" r="3.55"/><circle cx="1258.75" cy="484.4" r="3.55"/><circle cx="1161.9" cy="488.1" r="3.55"/><circle cx="1146.25" cy="491.5" r="3.55"/><circle cx="1178.5" cy="491.9" r="3.55"/><circle cx="1205.6" cy="491.25" r="3.55"/><circle cx="1151.5" cy="496.25" r="3.55"/><circle cx="1160.6" cy="496" r="3.55"/><circle cx="1208.75" cy="496.25" r="3.55"/><circle cx="1212.9" cy="500.6" r="3.55"/><circle cx="1168.5" cy="504" r="3.55"/><circle cx="1170.6" cy="504.4" r="3.55"/><circle cx="1172.5" cy="507.25" r="3.55"/><circle cx="1206.6" cy="506.25" r="3.55"/><circle cx="1214.1" cy="518.75" r="3.55"/><circle cx="1253.5" cy="526" r="3.55"/><circle cx="1210.9" cy="548.75" r="3.55"/><circle cx="1308.8" cy="259.7" r="3.55"/><circle cx="1448.5" cy="249" r="3.55"/><circle cx="1495.2" cy="249" r="3.55"/><circle cx="1514.1" cy="249" r="3.55"/><circle cx="1431.5" cy="263.7" r="3.55"/><circle cx="1445.1" cy="271.1" r="3.55"/><circle cx="1427.5" cy="281.7" r="3.55"/><circle cx="1427.5" cy="302.2" r="3.55"/><circle cx="1343.1" cy="314.8" r="3.55"/><circle cx="1476.6" cy="324.2" r="3.55"/><circle cx="1517.1" cy="346.9" r="3.55"/><circle cx="1390.8" cy="366.7" r="3.55"/><circle cx="1422.1" cy="370.9" r="3.55"/><circle cx="1259" cy="374.9" r="3.55"/><circle cx="1329.6" cy="377.2" r="3.55"/><circle cx="1317.2" cy="399" r="3.55"/><circle cx="1343.1" cy="421" r="3.55"/><circle cx="1469.2" cy="431.5" r="3.55"/><circle cx="1317.1" cy="441.7" r="3.55"/><circle cx="1325.6" cy="441.7" r="3.55"/><circle cx="1349.6" cy="441.7" r="3.55"/><circle cx="1329.8" cy="478.2" r="3.55"/></g><path d="M925.8 646h12.4M925.8 653.8h12.4" stroke="#777" stroke-width="1.2"/><path d="M925.8 650h12.4" stroke="#666" stroke-width="1.7"/></svg>
<div class="t" style="left:1200.24px;top:177.64px;font-size:14.6px;letter-spacing:-0.313px;color:#686868;">SQFT &lt; 3500</div>
<div class="t" style="left:1213.56px;top:198.64px;font-size:14.6px;letter-spacing:0.373px;color:#444;">Fitted line</div>
<div class="t" style="left:944.56px;top:224.44px;font-size:14.6px;letter-spacing:-1.192px;color:#585858;">PRICE</div>
<div class="t" style="left:927.72px;top:273.94px;font-size:14.6px;letter-spacing:0.023px;color:#585858;">2000</div>
<div class="t" style="left:927.49px;top:381.04px;font-size:14.6px;letter-spacing:0.099px;color:#585858;">1500</div>
<div class="t" style="left:927.49px;top:488.14px;font-size:14.6px;letter-spacing:0.099px;color:#585858;">1000</div>
<div class="t" style="left:935.94px;top:595.24px;font-size:14.6px;letter-spacing:-0.020px;color:#585858;">500</div>
<div class="t" style="left:1006.89px;top:613.04px;font-size:14.6px;letter-spacing:0.232px;color:#585858;">1000</div>
<div class="t" style="left:1135.19px;top:613.04px;font-size:14.6px;letter-spacing:0.232px;color:#585858;">1500</div>
<div class="t" style="left:1262.22px;top:613.04px;font-size:14.6px;letter-spacing:0.156px;color:#585858;">2000</div>
<div class="t" style="left:1390.22px;top:613.04px;font-size:14.6px;letter-spacing:0.156px;color:#585858;">2500</div>
<div class="t" style="left:1518.74px;top:613.04px;font-size:14.6px;letter-spacing:0.080px;color:#585858;">3000</div>
<div class="t" style="left:1241.54px;top:633.14px;font-size:14.6px;letter-spacing:-1.475px;color:#585858;">SQFT</div>
<div class="btn" style="left:1449.5px;top:684.2px;width:46px;height:37.6px;border-radius:2px"></div>
<div class="btn" style="left:1501.2px;top:684.2px;width:45px;height:37.6px;background:#9dc5d2;border-radius:2px"></div>
<div class="t" style="left:1467.35px;top:695.09px;font-size:17.5px;font-weight:bold;color:#fff;">&lt;</div>
<div class="t" style="left:1518.80px;top:694.51px;font-size:17px;color:#fff;">&gt;</div>
<div class="abs" id="redbox"></div>
<div class="abs" id="hsb"></div><div class="abs" id="hsbt"></div><div class="abs" id="botline"></div>
</body></html>
